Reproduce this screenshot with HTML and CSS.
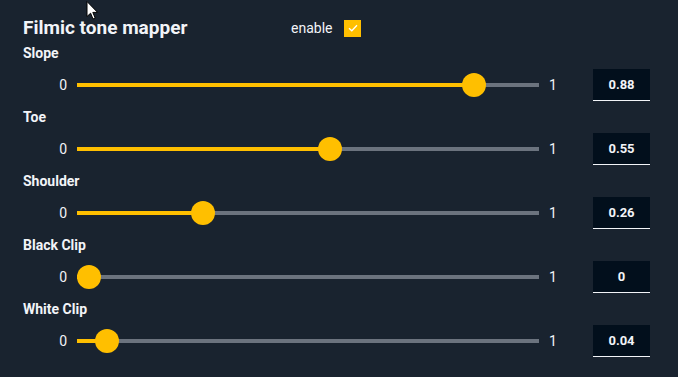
FILE: index.html
```html
<!DOCTYPE html>
<html>
<head>
<meta charset="utf-8">
<link rel="stylesheet" href="styles.css">
</head>
<body>
<div class="panel">
  <div class="header">
    <h1 class="title">Filmic tone mapper</h1>
    <label class="enable">enable <span class="check"><svg width="10" height="8" viewBox="0 0 10 8"><path d="M1 4.2 L3.8 6.8 L9 1.2" fill="none" stroke="#fff" stroke-width="1.3"/></svg></span></label>
  </div>

  <div class="param">
    <div class="label">Slope</div>
    <div class="row">
      <span class="min">0</span>
      <div class="track"><div class="fill" style="width:397px"></div><div class="thumb" style="left:385px"></div></div>
      <span class="max">1</span>
      <div class="value">0.88</div>
    </div>
  </div>

  <div class="param">
    <div class="label">Toe</div>
    <div class="row">
      <span class="min">0</span>
      <div class="track"><div class="fill" style="width:253px"></div><div class="thumb" style="left:241px"></div></div>
      <span class="max">1</span>
      <div class="value">0.55</div>
    </div>
  </div>

  <div class="param">
    <div class="label">Shoulder</div>
    <div class="row">
      <span class="min">0</span>
      <div class="track"><div class="fill" style="width:126px"></div><div class="thumb" style="left:114px"></div></div>
      <span class="max">1</span>
      <div class="value">0.26</div>
    </div>
  </div>

  <div class="param">
    <div class="label">Black Clip</div>
    <div class="row">
      <span class="min">0</span>
      <div class="track"><div class="fill" style="width:12px"></div><div class="thumb" style="left:0px"></div></div>
      <span class="max">1</span>
      <div class="value">0</div>
    </div>
  </div>

  <div class="param">
    <div class="label">White Clip</div>
    <div class="row">
      <span class="min">0</span>
      <div class="track"><div class="fill" style="width:30px"></div><div class="thumb" style="left:17.5px"></div></div>
      <span class="max">1</span>
      <div class="value">0.04</div>
    </div>
  </div>
</div>
<svg class="cursor" width="13" height="20" viewBox="0 0 13 20"><path d="M1 0.5 L1 15.5 L4.6 12.2 L7 18 L9.2 17 L6.8 11.4 L11.6 11.4 Z" fill="#fff" stroke="#000" stroke-width="1"/></svg>
</body>
</html>
```
FILE: styles.css
```css
html, body {
  margin: 0;
  padding: 0;
  background: #19232f;
}
body {
  width: 678px;
  height: 377px;
  overflow: hidden;
  position: relative;
  font-family: "Roboto", "Liberation Sans", sans-serif;
  color: #f2f4f8;
}
.panel {
  padding: 14px 0 0 23px;
}
.header {
  display: flex;
  align-items: center;
  height: 28px;
  margin-bottom: 1px;
}
.title {
  margin: 0;
  font-size: 19px;
  font-weight: 700;
  line-height: 28px;
  width: 268px;
}
.enable {
  display: flex;
  align-items: center;
  font-size: 14px;
  gap: 12px;
}
.check {
  width: 17px;
  height: 17px;
  background: #ffbf00;
  display: flex;
  align-items: center;
  justify-content: center;
}
.param {
  height: 64px;
}
.label {
  font-size: 14px;
  font-weight: 700;
  line-height: 20px;
  height: 20px;
  margin-bottom: 6px;
}
.row {
  display: flex;
  align-items: center;
  height: 32px;
}
.min {
  width: 44px;
  text-align: right;
  font-size: 14px;
  margin-right: 10px;
}
.max {
  width: 8px;
  font-size: 14px;
  margin-left: 10px;
  margin-right: 36px;
}
.track {
  position: relative;
  width: 462px;
  height: 4px;
  background: #6b737e;
}
.fill {
  height: 4px;
  background: #ffbf00;
}
.thumb {
  position: absolute;
  top: -10px;
  width: 24px;
  height: 24px;
  border-radius: 50%;
  background: #ffbf00;
}
.value {
  width: 57px;
  height: 31px;
  background: #020f1c;
  border-bottom: 1px solid #f2f4f8;
  display: flex;
  align-items: center;
  justify-content: center;
  font-size: 13px;
  font-weight: 700;
}
.cursor {
  position: absolute;
  left: 86px;
  top: 1px;
}
```
